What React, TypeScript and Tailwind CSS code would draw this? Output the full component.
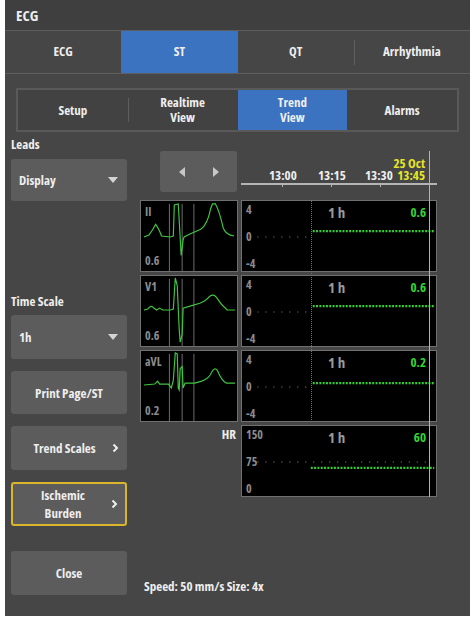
import React from 'react';

const FONT: React.CSSProperties = {
  fontFamily: '"Open Sans", Roboto, "Liberation Sans", sans-serif',
  fontStretch: '75%',
};

const tabs = ['ECG', 'ST', 'QT', 'Arrhythmia'];
const subTabs = [['Setup'], ['Realtime', 'View'], ['Trend', 'View'], ['Alarms']];

const waves = [
  {
    lead: 'II',
    value: '0.6',
    d: 'M3,37 L8,35 Q12,30 15,24 Q18,28 21,36 L30,37 L33,36 L34,4 L38,3 L39,20 L41,56 L43,40 L44,37 L50,34 L61,29 Q68,24 71,8 L73,3 L76,3 Q80,10 84,28 Q87,35 95,36',
  },
  {
    lead: 'V1',
    value: '0.6',
    d: 'M3,35 L7,34 Q10,29 13,33 L16,35 L19,33 L22,35 L30,35 L33,34 L35,2 L37,10 L39,55 L40,68 L42,60 L43,33 L50,31 L60,28 Q66,26 70,21 Q74,18 77,22 Q82,30 88,35 L96,35',
  },
  {
    lead: 'aVL',
    value: '0.2',
    d: 'M3,35 L14,34 L17,31 L19,34 L28,34 L31,38 L33,30 L35,2 L37,3 L38,38 L39,40 L40,18 L42,16 L43,38 L45,33 L55,33 L62,31 Q70,28 72,22 Q75,16 78,20 Q82,30 87,33 L96,33',
  },
];

const trends = [
  { top: '4', mid: '0', bottom: '-4', value: '0.6', y: 31, start: 71, grayFull: false },
  { top: '4', mid: '0', bottom: '-4', value: '0.6', y: 31, start: 71, grayFull: false },
  { top: '4', mid: '0', bottom: '-4', value: '0.2', y: 33, start: 71, grayFull: false },
  { top: '150', mid: '75', bottom: '0', value: '60', y: 43, start: 69, grayFull: true },
];

const Caret = () => (
  <svg width="10" height="6" viewBox="0 0 10 6" className="shrink-0">
    <path d="M0,0 L10,0 L5,6 Z" fill="#d4d4d4" />
  </svg>
);

const Chevron = () => (
  <svg width="7" height="10" viewBox="0 0 7 10" className="shrink-0">
    <path d="M1.5,1.5 L5,5 L1.5,8.5" fill="none" stroke="#eeeeee" strokeWidth="2" />
  </svg>
);

const Btn: React.FC<{ className?: string; children: React.ReactNode }> = ({ className = '', children }) => (
  <div className={`w-[116px] rounded-[3px] bg-[#5c5c5c] text-[13px] font-bold text-[#eeeeee] leading-[16px] ${className}`}>
    {children}
  </div>
);

const WaveBox: React.FC<{ lead: string; value: string; d: string }> = ({ lead, value, d }) => (
  <div className="relative h-[72px] w-[98px] border border-[#707070] bg-black">
    <svg className="absolute inset-0" width="96" height="70" viewBox="0 0 98 72" preserveAspectRatio="none">
      {[29, 42, 54].map((x) => (
        <line key={x} x1={x} y1="3" x2={x} y2="72" stroke="#6f6f6f" strokeWidth="1" />
      ))}
      <path d={d} fill="none" stroke="#3fc53f" strokeWidth="1.2" />
    </svg>
    <div className="relative flex h-full flex-col justify-between px-[4px] pt-[2px] pb-[1px] text-[12px] font-bold text-[#8c8c8c]">
      <span>{lead}</span>
      <span>{value}</span>
    </div>
  </div>
);

const TrendBox: React.FC<{ t: (typeof trends)[number] }> = ({ t }) => (
  <div className="relative h-[72px] w-[196px] border border-[#707070] bg-black">
    <svg className="absolute inset-0" width="194" height="70" viewBox="0 0 196 72">
      <line
        x1="14"
        y1="37"
        x2={t.grayFull ? 194 : 68}
        y2="37"
        stroke="#7a7a7a"
        strokeWidth="1.2"
        strokeDasharray="1.2 7"
      />
      <line x1={t.start} y1={t.y} x2="196" y2={t.y} stroke="#2fd12f" strokeWidth="2.4" strokeDasharray="2 1.4" />
    </svg>
    <div className="relative flex h-full flex-col justify-between px-[4px] pt-[1px] pb-0 text-[12px] font-bold leading-[15px] text-[#8c8c8c]">
      <span>{t.top}</span>
      <span>{t.mid}</span>
      <span>{t.bottom}</span>
    </div>
    <span className="absolute left-[86px] top-0 text-[15px] font-bold text-[#9a9a9a]">1 h</span>
    <span className="absolute right-[10px] top-[2px] text-[13px] font-bold text-[#35d435]">{t.value}</span>
  </div>
);

export default function App() {
  return (
    <div className="h-[619px] w-[474px] overflow-hidden bg-white" style={FONT}>
      <div className="ml-[5px] flex h-[616px] w-[465px] flex-col bg-[#464646] text-[#eeeeee]">
        {/* Title */}
        <div className="flex h-[31px] items-center border-b border-[#5e5e5e] bg-[#3f3f3f] px-[11px] text-[15px] font-bold">
          ECG
        </div>

        {/* Main tabs */}
        <div className="grid h-[43px] grid-cols-4 border-b border-[#5e5e5e] text-[13px] font-bold">
          {tabs.map((t, i) => (
            <div
              key={t}
              className={`flex items-center justify-center ${i === 1 ? 'bg-[#3b73c0]' : ''} ${
                i === 3 ? 'relative before:absolute before:left-0 before:top-[9px] before:h-[25px] before:w-px before:bg-[#5e5e5e]' : ''
              }`}
            >
              {t}
            </div>
          ))}
        </div>

        {/* Sub tabs */}
        <div className="mx-[11px] mt-[14px] grid h-[44px] grid-cols-4 border-2 border-[#595959] bg-[#424242] text-[13px] font-bold leading-[15px]">
          {subTabs.map((lines, i) => (
            <div
              key={i}
              className={`flex items-center justify-center text-center ${i === 2 ? 'bg-[#3b73c0]' : ''} ${
                i === 1 ? 'relative before:absolute before:left-0 before:top-[8px] before:h-[24px] before:w-px before:bg-[#5e5e5e]' : ''
              }`}
            >
              <span>
                {lines[0]}
                {lines[1] && (
                  <>
                    <br />
                    {lines[1]}
                  </>
                )}
              </span>
            </div>
          ))}
        </div>

        {/* Body */}
        <div className="flex">
          {/* Left controls */}
          <div className="ml-[6px] flex w-[116px] flex-col">
            <div className="mt-[5px] h-[15px] text-[13px] font-bold leading-[15px]">Leads</div>
            <Btn className="mt-[7px] flex h-[42px] items-center justify-between pl-[8px] pr-[9px]">
              <span>Display</span>
              <Caret />
            </Btn>
            <div className="mt-[93px] h-[15px] text-[13px] font-bold leading-[15px]">Time Scale</div>
            <Btn className="mt-[6px] flex h-[44px] items-center justify-between pl-[8px] pr-[9px]">
              <span>1h</span>
              <Caret />
            </Btn>
            <Btn className="mt-[12px] flex h-[43px] items-center justify-center">Print Page/ST</Btn>
            <Btn className="mt-[12px] flex h-[44px] items-center pl-[16px] pr-[8px]">
              <span className="flex-1 whitespace-nowrap text-center">Trend Scales</span>
              <span className="ml-[10px]">
                <Chevron />
              </span>
            </Btn>
            <Btn className="mt-[12px] flex h-[44px] items-center border-2 border-[#d9b62c] pl-[12px] pr-[7px]">
              <span className="flex-1 text-center leading-[18px]">
                Ischemic
                <br />
                Burden
              </span>
              <span className="ml-[10px]">
                <Chevron />
              </span>
            </Btn>
            <Btn className="mt-[25px] flex h-[44px] items-center justify-center">Close</Btn>
          </div>

          {/* Right trend area */}
          <div className="relative ml-[13px] flex flex-col">
            <div className="mt-[19px] flex h-[47px]">
              <div className="ml-[20px] flex h-[41px] w-[77px] items-center justify-center gap-[28px] rounded-[3px] bg-[#5c5c5c]">
                <svg width="6" height="10" viewBox="0 0 6 10">
                  <path d="M6,0 L6,10 L0,5 Z" fill="#c8c8c8" />
                </svg>
                <svg width="6" height="10" viewBox="0 0 6 10">
                  <path d="M0,0 L0,10 L6,5 Z" fill="#c8c8c8" />
                </svg>
              </div>
              {/* time axis */}
              <div className="relative ml-[4px] h-[47px] w-[196px] text-[13px] font-bold leading-[14px]">
                <span className="absolute right-[12px] top-[5px] text-[#e6e628]">25 Oct</span>
                <span className="absolute left-[28px] top-[17px]">13:00</span>
                <span className="absolute left-[77px] top-[17px]">13:15</span>
                <span className="absolute left-[124px] top-[17px]">13:30</span>
                <span className="absolute right-[12px] top-[17px] text-[#e6e628]">13:45</span>
                <div className="absolute left-0 right-0 top-[32px] h-[2px] bg-[#b4b4b4]" />
                {[41, 90, 139].map((x) => (
                  <div key={x} className="absolute top-[33px] h-[3px] w-px bg-[#b4b4b4]" style={{ left: x }} />
                ))}
              </div>
            </div>

            <div className="mt-[2px] flex flex-col gap-[3px]">
              {waves.map((w, i) => (
                <div key={w.lead} className="flex gap-[3px]">
                  <WaveBox lead={w.lead} value={w.value} d={w.d} />
                  <TrendBox t={trends[i]} />
                </div>
              ))}
              <div className="flex gap-[3px]">
                <div className="w-[98px] pr-[2px] text-right text-[13px] font-bold">HR</div>
                <TrendBox t={trends[3]} />
              </div>
            </div>

            <div className="ml-[4px] mt-[82px] text-[13px] font-bold leading-[14px]">Speed: 50 mm/s Size: 4x</div>

            {/* cursor lines */}
            <div className="absolute left-[171px] top-[68px] h-[222px] border-l border-dotted border-[#2aa52a]" />
            <div className="absolute left-[289px] top-[19px] h-[346px] w-px bg-[#c9c51e]" />
          </div>
        </div>
      </div>
    </div>
  );
}
